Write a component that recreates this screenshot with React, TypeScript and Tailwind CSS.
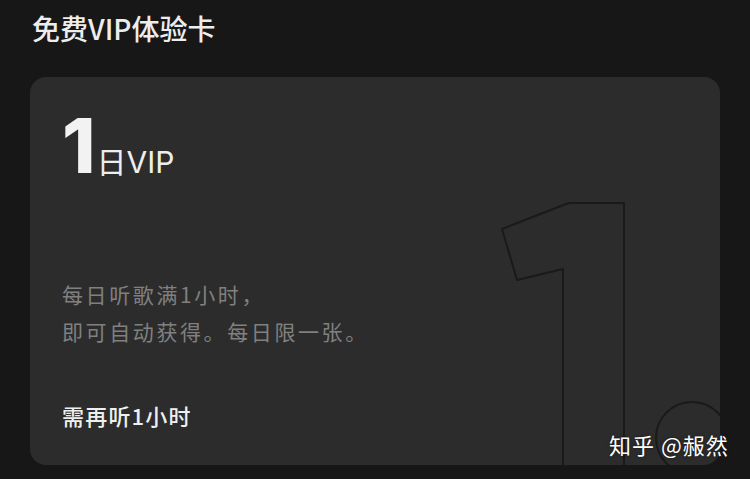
import React from "react";

const cjk = { fontFamily: '"Noto Sans CJK SC", "Noto Sans", sans-serif' };
const latin = { fontFamily: 'Inter, "Noto Sans CJK SC", sans-serif' };

export default function App() {
  return (
    <div className="relative w-[750px] h-[479px] overflow-hidden bg-[#171717]" style={cjk}>
      <div className="pl-[32px] pt-[14px] h-[77px]">
        <h1 className="text-[28px] leading-[28px] font-medium text-[#ededed]">免费VIP体验卡</h1>
      </div>
      <div className="relative ml-[30px] w-[690px] h-[388px] rounded-[16px] bg-[#2c2c2c] overflow-hidden">
        <svg className="absolute left-0 top-0" width="690" height="388" viewBox="0 0 690 388" fill="none">
          <path
            d="M533 392 L533 192 L487 203 L472 152 L536 127 L540 126 L594 126 L594 392"
            stroke="#1a1a1a"
            strokeWidth="2"
            strokeLinejoin="round"
          />
          <circle cx="662" cy="361" r="36" stroke="#1a1a1a" strokeWidth="2" />
        </svg>
        <div className="relative flex flex-col pl-[32px]">
          <div className="flex items-baseline pt-[30px]">
            <span className="text-[76px] leading-[76px] font-extrabold text-[#f2f2f2] tracking-[-3px]" style={latin}>1</span>
            <span className="ml-[4px] text-[30px] leading-[30px] text-[#eeeeee]">日</span>
            <span className="text-[30px] leading-[30px] text-[#eeeeee]" style={latin}>VIP</span>
          </div>
          <div className="mt-[93px] text-[21px] leading-[37px] tracking-[2.6px] text-[#808080]">
            <p>每日听歌满1小时，</p>
            <p>即可自动获得。每日限一张。</p>
          </div>
          <p className="mt-[51px] text-[22px] leading-[28px] font-medium tracking-[1.2px] text-[#efefef]">需再听1小时</p>
        </div>
      </div>
      <div className="absolute left-[609px] top-[430px] text-[22px] leading-[28px] tracking-[1px] text-white [text-shadow:0_0_3px_rgba(0,0,0,0.6)] whitespace-nowrap">
        知乎 @赧然
      </div>
    </div>
  );
}
